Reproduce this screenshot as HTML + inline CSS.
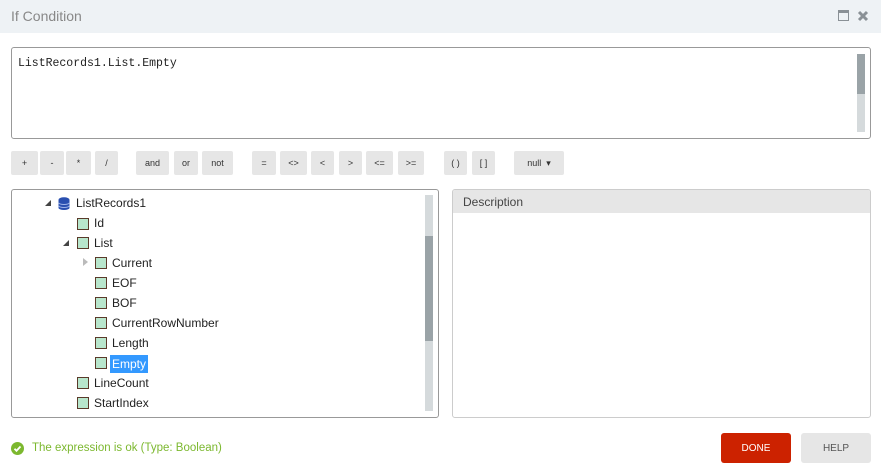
<!DOCTYPE html>
<html><head><style>
*{box-sizing:border-box;margin:0;padding:0}
body{width:881px;height:471px;background:#fff;font-family:"Liberation Sans",sans-serif;position:relative;overflow:hidden}
.a{position:absolute}
.hdr{left:0;top:0;width:881px;height:33px;background:#eef2f5}
.ttl{left:11px;top:8px;font-size:14px;color:#888}
.ta{left:11px;top:47px;width:860px;height:92px;border:1px solid #999;border-radius:3px}
.code{left:18px;top:57px;font-family:"Liberation Mono",monospace;font-size:11.5px;color:#222}
.b{position:absolute;top:151px;height:24px;background:#e6e6e6;border-radius:2px;font-size:9px;color:#333;text-align:center;line-height:24px}
.tree{left:11px;top:189px;width:428px;height:229px;border:1px solid #999;border-radius:3px}
.r{position:absolute;color:#222;line-height:18px;height:18px;font-family:"Liberation Sans",sans-serif;font-size:12px}
.ic{position:absolute;width:12px;height:12px;background:#b8e6cc;border:1px solid #5a3a2a}
.tri{position:absolute;width:0;height:0;border-left:6px solid transparent;border-bottom:6px solid #444}
.desc{left:452px;top:189px;width:419px;height:229px;border:1px solid #ccc;border-radius:3px;overflow:hidden}
.dh{height:23px;background:#e6e6e6;font-size:12px;color:#444;padding-left:10px;line-height:25px}
.btn{position:absolute;top:433px;width:70px;height:30px;border-radius:3px;font-size:10px;display:flex;align-items:center;justify-content:center}
</style></head><body>
<div class="a hdr"></div>
<div class="a ttl">If Condition</div>
<div class="a" style="left:838px;top:10px;width:11px;height:11px;border:1.5px solid #8a9196;border-top-width:3px"></div>
<svg class="a" style="left:857px;top:10px" width="12" height="12" viewBox="0 0 12 12"><path d="M2 2L10 10M10 2L2 10" stroke="#8a9196" stroke-width="3"/></svg>

<div class="a ta"></div>
<div class="a code">ListRecords1.List.Empty</div>
<div class="a" style="left:857px;top:54px;width:8px;height:78px;background:#d5dadc"></div>
<div class="a" style="left:857px;top:54px;width:8px;height:40px;background:#9aa3a7"></div>

<div class="b" style="left:11px;width:27px">+</div>
<div class="b" style="left:40px;width:24px">-</div>
<div class="b" style="left:66px;width:25px">*</div>
<div class="b" style="left:95px;width:23px">/</div>
<div class="b" style="left:136px;width:33px">and</div>
<div class="b" style="left:174px;width:24px">or</div>
<div class="b" style="left:202px;width:31px">not</div>
<div class="b" style="left:252px;width:24px">=</div>
<div class="b" style="left:280px;width:27px">&lt;&gt;</div>
<div class="b" style="left:311px;width:23px">&lt;</div>
<div class="b" style="left:339px;width:23px">&gt;</div>
<div class="b" style="left:366px;width:27px">&lt;=</div>
<div class="b" style="left:398px;width:26px">&gt;=</div>
<div class="b" style="left:444px;width:23px">( )</div>
<div class="b" style="left:472px;width:23px">[ ]</div>
<div class="b" style="left:514px;width:50px">null &nbsp;▾</div>

<div class="a tree"></div>
<div class="a" style="left:425px;top:195px;width:8px;height:216px;background:#d5dadc"></div>
<div class="a" style="left:425px;top:236px;width:8px;height:105px;background:#9aa3a7"></div>

<div class="tri" style="left:45px;top:200px"></div>
<svg class="a" style="left:58px;top:197px" width="12" height="13" viewBox="0 0 12 13"><ellipse cx="6" cy="2.5" rx="5.5" ry="2.2" fill="#2a4fb0"/><path d="M0.5 3v8a5.5 2 0 0 0 11 0V3" fill="#2a4fb0"/><path d="M0.5 5.5a5.5 2 0 0 0 11 0M0.5 8.5a5.5 2 0 0 0 11 0" stroke="#9fb4e8" fill="none"/></svg>
<div class="r" style="left:76px;top:194px">ListRecords1</div>

<div class="ic" style="left:77px;top:218px"></div><div class="r" style="left:94px;top:214px">Id</div>
<div class="tri" style="left:63px;top:240px"></div>
<div class="ic" style="left:77px;top:237px"></div><div class="r" style="left:94px;top:234px">List</div>
<div class="a" style="left:83px;top:258px;width:0;height:0;border-top:4px solid transparent;border-bottom:4px solid transparent;border-left:5px solid #bbb"></div>
<div class="ic" style="left:95px;top:257px"></div><div class="r" style="left:112px;top:254px">Current</div>
<div class="ic" style="left:95px;top:277px"></div><div class="r" style="left:112px;top:274px">EOF</div>
<div class="ic" style="left:95px;top:297px"></div><div class="r" style="left:112px;top:294px">BOF</div>
<div class="ic" style="left:95px;top:317px"></div><div class="r" style="left:112px;top:314px">CurrentRowNumber</div>
<div class="ic" style="left:95px;top:337px"></div><div class="r" style="left:112px;top:334px">Length</div>
<div class="ic" style="left:95px;top:357px"></div>
<div class="a" style="left:110px;top:355px;width:38px;height:18px;background:#3399ff"></div>
<div class="r" style="left:112px;top:355px;color:#fff">Empty</div>
<div class="ic" style="left:77px;top:377px"></div><div class="r" style="left:94px;top:374px">LineCount</div>
<div class="ic" style="left:77px;top:397px"></div><div class="r" style="left:94px;top:394px">StartIndex</div>

<div class="a desc"><div class="dh">Description</div></div>

<svg class="a" style="left:11px;top:442px" width="13" height="13" viewBox="0 0 13 13"><circle cx="6.5" cy="6.5" r="6.5" fill="#7cb82f"/><path d="M3.5 6.8l2 2 4-4.3" stroke="#fff" stroke-width="1.8" fill="none"/></svg>
<div class="a" style="left:32px;top:442px;font-size:11.5px;color:#7cb82f">The expression is ok (Type: Boolean)</div>
<div class="btn" style="left:721px;background:#cc2200;color:#fff">DONE</div>
<div class="btn" style="left:801px;background:#e6e6e6;color:#555">HELP</div>
</body></html>
